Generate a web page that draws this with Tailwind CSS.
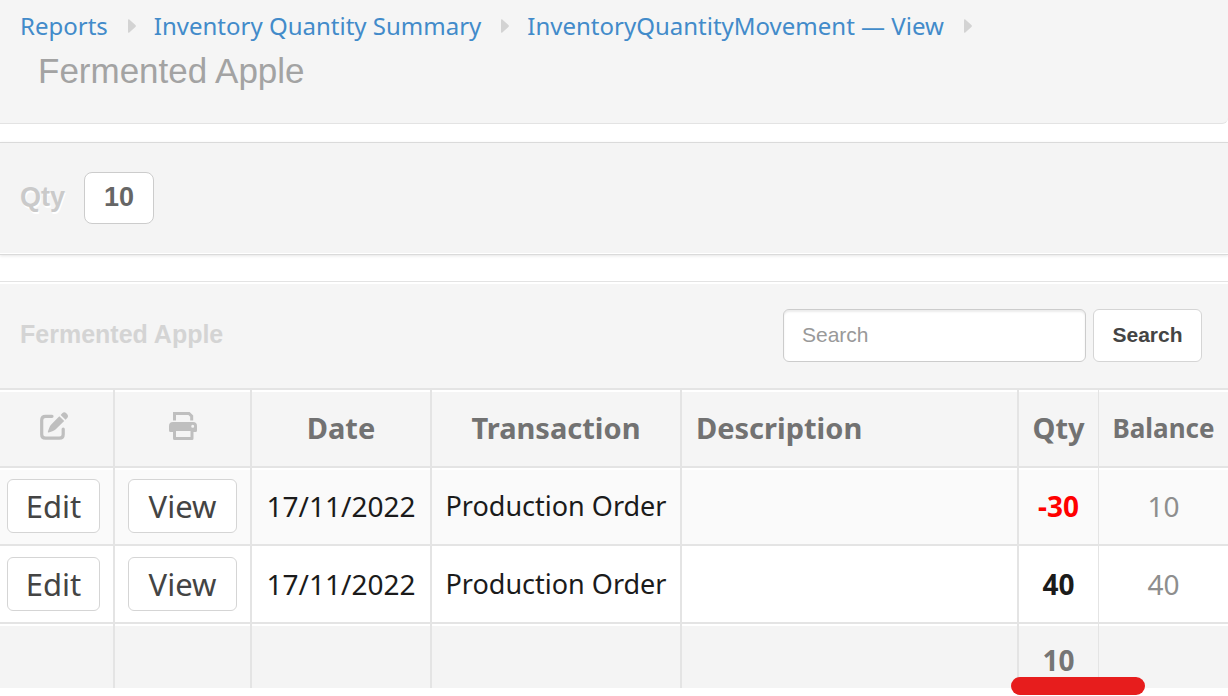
<!DOCTYPE html>
<html lang="en">
<head>
    <meta charset="UTF-8">
    <meta name="viewport" content="width=device-width, initial-scale=1.0">
    <title>Inventory Quantity Movement</title>

    <!-- Scripts -->
    <script src="https://cdn.jsdelivr.net/npm/@tailwindcss/browser@4"></script>
</head>
<body class="bg-white min-h-screen pb-2 font-['Liberation_Sans',sans-serif]">

    <!-- Breadcrumb -->
    <header class="bg-[#f5f5f5] border-b border-[#e3e3e3] rounded-br-md h-31 pt-2">
        <nav class="flex items-center gap-5 pl-5 h-9 text-[24px] leading-9 text-[#428bca] font-['Noto_Sans',sans-serif]" aria-label="Breadcrumb">
            <a href="#">Reports</a>
            <svg class="w-2 h-4 -mr-0.5" viewBox="0 0 8 16" fill="#d3d3d3"><path d="M0 2.200Q0 .5 1.300 1.500L7.400 7Q8.300 8 7.400 9L1.300 14.500Q0 15.500 0 13.800Z"/></svg>
            <a href="#">Inventory Quantity Summary</a>
            <svg class="w-2 h-4 -mr-0.5" viewBox="0 0 8 16" fill="#d3d3d3"><path d="M0 2.200Q0 .5 1.300 1.500L7.400 7Q8.300 8 7.400 9L1.300 14.500Q0 15.500 0 13.800Z"/></svg>
            <a href="#">InventoryQuantityMovement — View</a>
            <svg class="w-2 h-4" viewBox="0 0 8 16" fill="#d3d3d3"><path d="M0 2.200Q0 .5 1.300 1.500L7.400 7Q8.300 8 7.400 9L1.300 14.500Q0 15.500 0 13.800Z"/></svg>
        </nav>
        <h1 class="pl-[38px] pt-[3px] text-[35px] leading-12 text-[#a3a3a3]">Fermented Apple</h1>
    </header>

    <!-- Quantity -->
    <section class="mt-[18px] flex items-center h-[113px] pl-5 pb-[2px] gap-[19px] bg-[#f4f4f4] border-y border-[#dadada] shadow-[inset_0_-1px_0_#fff,0_1px_3px_rgba(0,0,0,0.1)]">
        <label for="qty" class="text-[27px] font-bold text-[#cacaca] [text-shadow:1px_2px_0_#fff]">Qty</label>
        <input id="qty" type="text" value="10" readonly class="w-[70px] h-[52px] rounded-lg border border-[#ccc] bg-white text-center text-[27px] font-bold text-[#666]">
    </section>

    <!-- Movements -->
    <section class="mt-[26px] border-t border-[#e3e3e3]">
        <div class="flex items-center justify-between h-[106px] pl-5 pr-[26px] bg-[#f5f5f5] shadow-[inset_0_2px_0_#fff]">
            <h2 class="text-[25px] font-bold text-[#d4d4d4]">Fermented Apple</h2>
            <form class="flex gap-[7px]">
                <input type="search" aria-label="Search" placeholder="Search" class="w-[303px] h-[53px] px-[18px] rounded-md border border-[#ccc] bg-white text-[21px] placeholder:text-[#999] shadow-[inset_0_2px_2px_rgba(0,0,0,0.08)]">
                <button type="button" class="w-[109px] h-[53px] rounded-md border border-[#d5d5d5] bg-white text-[21px] font-bold text-[#444]">Search</button>
            </form>
        </div>

        <table class="w-full table-fixed border-separate border-spacing-0 border-t-2 border-[#e4e4e4] text-center text-[28px] leading-9 text-[#1b1b1b] font-['Noto_Sans',sans-serif]">
            <colgroup>
                <col class="w-[115px]">
                <col class="w-[137px]">
                <col class="w-[180px]">
                <col class="w-[250px]">
                <col>
                <col class="w-[80px]">
                <col class="w-[129px]">
            </colgroup>
            <thead>
                <tr class="h-[78px] bg-[#f5f5f5] text-[29px] text-[#727272] *:border-b-2 *:border-[#e4e4e4] *:shadow-[inset_0_2px_0_#fff]">
                    <th class="border-r-2 pr-[6px]" aria-label="Edit">
                        <svg class="w-7 h-7 block mx-auto mb-1" viewBox="0 0 28 28" fill="#bfbfbf">
                            <path d="M12 4.300H5.500Q1.700 4.300 1.700 8V22.500Q1.700 26.200 5.500 26.200H19.500Q23.200 26.200 23.200 22.500V17" fill="none" stroke="#bfbfbf" stroke-width="3.200" stroke-linecap="round"/>
                            <path d="M19.300 4.200L24.200 9.100L15.500 17.600Q14.500 18.500 13 19L8.800 20.400Q7.500 20.700 7.900 19.400L9.400 15.500Q10 13.800 11 12.700Z"/>
                            <path d="M20.700 2.900L22.200 1.300Q24.200-.7 26.300 1.200L27 2Q29 4.200 27 6.200L25.500 7.700Z"/>
                        </svg>
                    </th>
                    <th class="border-r-2" aria-label="View">
                        <svg class="w-7 h-7 block mx-auto mb-1" viewBox="0 0 28 28" fill="#bfbfbf">
                            <path d="M5.500 8.500V1.500H20L22.700 4.200V8.500" fill="none" stroke="#bfbfbf" stroke-width="3"/>
                            <path fill-rule="evenodd" d="M4 10H24Q28 10 28 14V18.500Q28 20 26.500 20H24.500V26.500Q24.500 28 23 28H5.500Q4 28 4 26.500V20H1.500Q0 20 0 18.500V14Q0 10 4 10ZM7 19V25H21.500V19ZM23.700 12.800A1.500 1.500 0 1 0 23.700 15.800A1.500 1.500 0 1 0 23.700 12.800Z"/>
                        </svg>
                    </th>
                    <th class="border-r-2">Date</th>
                    <th class="border-r-2">Transaction</th>
                    <th class="border-r-2 pl-[14px] text-left">Description</th>
                    <th class="border-r">Qty</th>
                    <th class="text-[26px]">Balance</th>
                </tr>
            </thead>
            <tbody>
                <tr class="h-[78px] bg-[#fafafa] *:border-b-2 *:border-[#e4e4e4] *:shadow-[inset_0_2px_0_#fff]">
                    <td class="border-r-2 pr-[6px]"><button type="button" class="w-[93px] h-[54px] rounded-md border border-[#d5d5d5] bg-white text-[31px] text-[#444]">Edit</button></td>
                    <td class="border-r-2"><button type="button" class="w-[109px] h-[54px] rounded-md border border-[#d5d5d5] bg-white text-[31px] text-[#444]">View</button></td>
                    <td class="border-r-2">17/11/2022</td>
                    <td class="border-r-2 whitespace-nowrap text-[27px]">Production Order</td>
                    <td class="border-r-2"></td>
                    <td class="border-r font-bold text-[#f00]">-30</td>
                    <td class="text-[#8e8e8e]">10</td>
                </tr>
                <tr class="h-[78px] bg-white *:border-b-2 *:border-[#e4e4e4]">
                    <td class="border-r-2 pr-[6px]"><button type="button" class="w-[93px] h-[54px] rounded-md border border-[#d5d5d5] bg-white text-[31px] text-[#444]">Edit</button></td>
                    <td class="border-r-2"><button type="button" class="w-[109px] h-[54px] rounded-md border border-[#d5d5d5] bg-white text-[31px] text-[#444]">View</button></td>
                    <td class="border-r-2">17/11/2022</td>
                    <td class="border-r-2 whitespace-nowrap text-[27px]">Production Order</td>
                    <td class="border-r-2"></td>
                    <td class="border-r font-bold">40</td>
                    <td class="text-[#8e8e8e]">40</td>
                </tr>
            </tbody>
            <tfoot>
                <tr class="h-16 bg-[#f4f4f4] *:border-[#e4e4e4] *:shadow-[inset_0_2px_0_#fff]">
                    <td class="border-r-2"></td>
                    <td class="border-r-2"></td>
                    <td class="border-r-2"></td>
                    <td class="border-r-2"></td>
                    <td class="border-r-2"></td>
                    <td class="relative border-r pt-2 font-bold text-[#757575]">
                        10
                        <!-- Marker under the total -->
                        <span class="absolute -left-2 -bottom-[7px] z-10 w-[134px] h-[18px] rounded-full bg-[#e71d1d]"></span>
                    </td>
                    <td></td>
                </tr>
            </tfoot>
        </table>
    </section>
</body>
</html>
